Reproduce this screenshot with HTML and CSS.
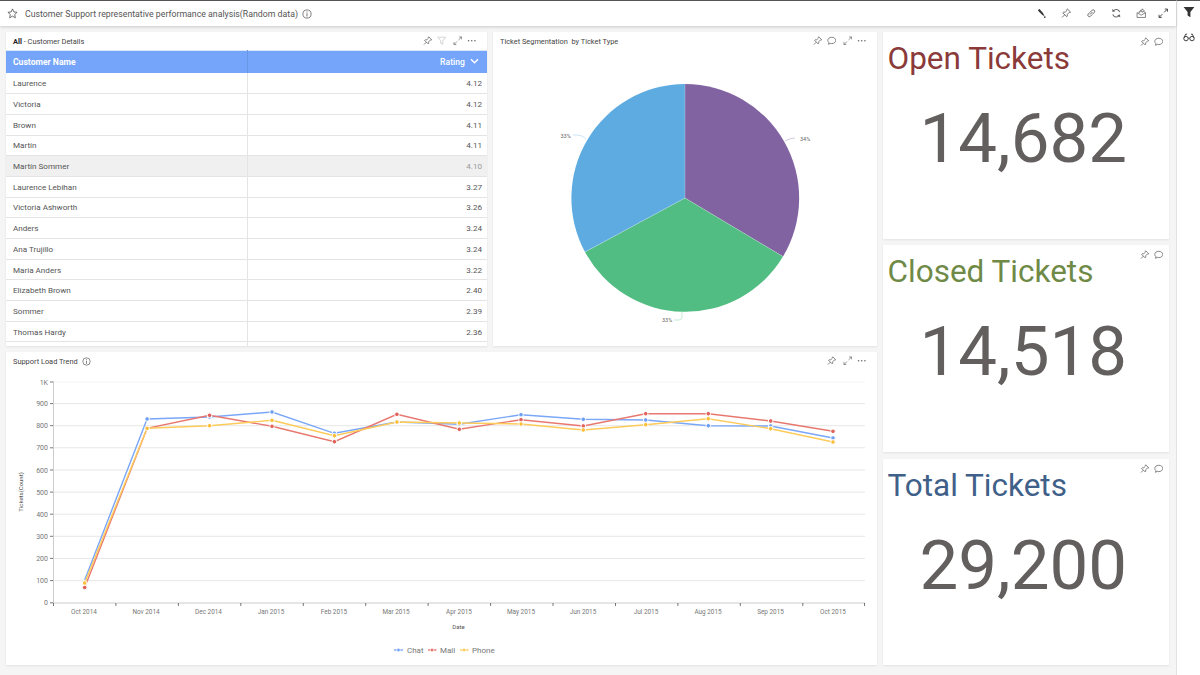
FILE: index.html
```html
<!DOCTYPE html>
<html lang="en">
<head>
<meta charset="utf-8">
<title>Customer Support representative performance analysis</title>
<link rel="stylesheet" href="styles.css">
</head>
<body>
<svg class="sprite" aria-hidden="true">
  <symbol id="i-pin" viewBox="0 0 12 12"><path d="M7.2 1 11 4.8 10.2 5.3 9.4 5 7.3 7.2 7.2 9.2 6.5 10 2 5.5 2.8 4.8 4.8 4.7 7 2.6 6.7 1.8ZM4.2 7.8 1.2 10.8" fill="none" stroke="currentColor" stroke-width="1" stroke-linejoin="round"/></symbol>
  <symbol id="i-filter" viewBox="0 0 12 12"><path d="M1 1.5H11L7.3 6V10.5L4.7 9V6Z" fill="none" stroke="currentColor" stroke-width="1" stroke-linejoin="round"/></symbol>
  <symbol id="i-expand" viewBox="0 0 12 12"><path d="M7 5 10.5 1.5M7.8 1.2H10.8V4.2M5 7 1.5 10.5M1.2 7.8V10.8H4.2" fill="none" stroke="currentColor" stroke-width="1"/></symbol>
  <symbol id="i-dots" viewBox="0 0 12 12"><circle cx="2" cy="6" r="1" fill="currentColor"/><circle cx="6" cy="6" r="1" fill="currentColor"/><circle cx="10" cy="6" r="1" fill="currentColor"/></symbol>
  <symbol id="i-comment" viewBox="0 0 12 12"><path d="M6 1.6C8.9 1.6 11 3.3 11 5.6S8.9 9.6 6 9.6C5.3 9.6 4.7 9.5 4.1 9.3L1.9 10.5 2.4 8.3C1.5 7.6 1 6.7 1 5.6 1 3.3 3.1 1.6 6 1.6Z" fill="none" stroke="currentColor" stroke-width="1" stroke-linejoin="round"/></symbol>
  <symbol id="i-info" viewBox="0 0 12 12"><circle cx="6" cy="6" r="4.9" fill="none" stroke="currentColor" stroke-width="1"/><path d="M6 5.2V9M6 3V4.2" stroke="currentColor" stroke-width="1.1"/></symbol>
</svg>

<div class="main">
  <header class="topbar">
    <svg class="star" viewBox="0 0 12 12"><path d="M6 1 7.5 4.3 11 4.7 8.4 7.1 9.1 10.7 6 8.9 2.9 10.7 3.6 7.1 1 4.7 4.5 4.3Z" fill="none" stroke="currentColor" stroke-width=".9" stroke-linejoin="round"/></svg>
    <h1 class="page-title">Customer Support representative performance analysis(Random data)</h1>
    <svg class="ic-info"><use href="#i-info"/></svg>
    <div class="top-actions">
      <svg class="tool dark" viewBox="0 0 12 12"><path d="M2.2 2.2 4 1 8 5.6 9.8 9.2 7.6 8.2 3.4 4.4Z" fill="currentColor"/><circle cx="10" cy="10.4" r="1" fill="currentColor"/></svg>
      <svg class="tool"><use href="#i-pin"/></svg>
      <svg class="tool" viewBox="0 0 12 12"><path d="M4.6 7.4 7.4 4.6M4.6 4.9 2.4 7.1A1.8 1.8 0 0 0 4.9 9.6L7.1 7.4M4.9 4.6 7.1 2.4A1.8 1.8 0 0 1 9.6 4.9L7.4 7.1" fill="none" stroke="currentColor" stroke-width="1.1"/></svg>
      <svg class="tool" viewBox="0 0 12 12"><path d="M10 4.6A4.3 4.3 0 0 0 2.6 3.4M2 7.4A4.3 4.3 0 0 0 9.4 8.6" fill="none" stroke="currentColor" stroke-width="1.2"/><path d="M1.4 1.2 1.7 4.6 5 3.8ZM10.6 10.8 10.3 7.4 7 8.2Z" fill="currentColor"/></svg>
      <svg class="tool" viewBox="0 0 12 12"><path d="M1.2 5.2V10.8H10.8V5.2L8.8 4M1.2 5.4 6 8.2 10.8 5.4M3.4 5.5C3.7 3.4 5 2.4 7 2.4V1L9.5 3.1 7 5V3.8C5.5 3.8 4.3 4.3 3.4 5.5Z" fill="none" stroke="currentColor" stroke-width=".9" stroke-linejoin="round"/></svg>
      <svg class="tool dark last"><use href="#i-expand"/></svg>
    </div>
  </header>

  <div class="dashboard">
    <div class="left">
      <div class="top-row">
        <section class="card table-card">
          <div class="card-head head-table">
            <span class="card-title"><b>All</b> - Customer Details</span>
            <div class="icons">
              <svg class="ic"><use href="#i-pin"/></svg>
              <svg class="ic faint"><use href="#i-filter"/></svg>
              <svg class="ic wide"><use href="#i-expand"/></svg>
              <svg class="ic"><use href="#i-dots"/></svg>
            </div>
          </div>
          <table class="grid">
            <thead>
              <tr><th class="name">Customer Name</th><th class="rate">Rating <svg class="chev" viewBox="0 0 10 8"><path d="M1 1.5 5 5.5 9 1.5" fill="none" stroke="#fff" stroke-width="1.6"/></svg></th></tr>
            </thead>
            <tbody>
              <tr><td>Laurence</td><td class="num">4.12</td></tr>
              <tr><td>Victoria</td><td class="num">4.12</td></tr>
              <tr><td>Brown</td><td class="num">4.11</td></tr>
              <tr><td>Martín</td><td class="num">4.11</td></tr>
              <tr class="hover"><td>Martín Sommer</td><td class="num">4.10</td></tr>
              <tr><td>Laurence Lebihan</td><td class="num">3.27</td></tr>
              <tr><td>Victoria Ashworth</td><td class="num">3.26</td></tr>
              <tr><td>Anders</td><td class="num">3.24</td></tr>
              <tr><td>Ana Trujillo</td><td class="num">3.24</td></tr>
              <tr><td>Maria Anders</td><td class="num">3.22</td></tr>
              <tr><td>Elizabeth Brown</td><td class="num">2.40</td></tr>
              <tr><td>Sommer</td><td class="num">2.39</td></tr>
              <tr><td>Thomas Hardy</td><td class="num">2.36</td></tr>
              <tr><td>&nbsp;</td><td class="num">&nbsp;</td></tr>
            </tbody>
          </table>
        </section>

        <section class="card pie-card">
          <div class="card-head head-pie">
            <span class="card-title">Ticket Segmentation&nbsp; by Ticket Type</span>
            <div class="icons">
              <svg class="ic"><use href="#i-pin"/></svg>
              <svg class="ic"><use href="#i-comment"/></svg>
              <svg class="ic wide"><use href="#i-expand"/></svg>
              <svg class="ic"><use href="#i-dots"/></svg>
            </div>
          </div>
          <svg class="pie" viewBox="493 50 384 296">
            <path d="M685 198V84A114 114 0 0 1 783 256.5Z" fill="#8063a0"/>
            <path d="M685 198 783 256.5A114 114 0 0 1 585 252Z" fill="#52bd82"/>
            <path d="M685 198 585 252A114 114 0 0 1 685 84Z" fill="#5dabe0"/>
            <path d="M685 84V198L783 256.5M685 198 585 252" fill="none" stroke="#fff" stroke-width=".4" opacity=".6"/>
            <path d="M785 141Q790 138 795 138" fill="none" stroke="#c9bcd8" stroke-width=".8"/>
            <path d="M573 135H578Q582 135 586 139" fill="none" stroke="#bfdcf2" stroke-width=".8"/>
            <path d="M682 312V317Q682 320 679 320H674" fill="none" stroke="#b8e6cc" stroke-width=".8"/>
            <text class="pie-label" x="560.5" y="137.5">33%</text>
            <text class="pie-label" x="800" y="140.5">34%</text>
            <text class="pie-label" x="662" y="322">33%</text>
          </svg>
        </section>
      </div>

      <section class="card line-card">
        <div class="card-head head-line">
          <span class="card-title">Support Load Trend</span>
          <svg class="ic-info small"><use href="#i-info"/></svg>
          <div class="icons">
            <svg class="ic"><use href="#i-pin"/></svg>
            <svg class="ic wide"><use href="#i-expand"/></svg>
            <svg class="ic"><use href="#i-dots"/></svg>
          </div>
        </div>
        <svg class="line-chart" viewBox="6 370 871 295">
          <g class="gridlines">
            <path class="g-top" d="M53 382H865"/>
            <path d="M53 403.6H865M53 425.7H865M53 447.8H865M53 470H865M53 492.1H865M53 514.2H865M53 536.3H865M53 558.4H865M53 580.6H865"/>
          </g>
          <path class="axis" d="M53.5 381V603M53 603H865"/>
          <path class="ticks" d="M50 382H53M50 403.6H53M50 425.7H53M50 447.8H53M50 470H53M50 492.1H53M50 514.2H53M50 536.3H53M50 558.4H53M50 580.6H53M50 602.8H53M53.5 603V606M115.9 603V606M178.4 603V606M240.8 603V606M303.3 603V606M365.7 603V606M428.1 603V606M490.6 603V606M553 603V606M615.5 603V606M677.9 603V606M740.3 603V606M802.8 603V606M864.5 603V606"/>
          <g class="y-labels">
            <text x="48" y="384.5">1K</text><text x="48" y="406">900</text><text x="48" y="428">800</text><text x="48" y="450">700</text><text x="48" y="472.5">600</text><text x="48" y="494.5">500</text><text x="48" y="516.5">400</text><text x="48" y="538.5">300</text><text x="48" y="561">200</text><text x="48" y="583">100</text><text x="48" y="605">0</text>
          </g>
          <g class="x-labels">
            <text x="84" y="614">Oct 2014</text><text x="146" y="614">Nov 2014</text><text x="208.5" y="614">Dec 2014</text><text x="271" y="614">Jan 2015</text><text x="334" y="614">Feb 2015</text><text x="396" y="614">Mar 2015</text><text x="459" y="614">Apr 2015</text><text x="521" y="614">May 2015</text><text x="583" y="614">Jun 2015</text><text x="646" y="614">Jul 2015</text><text x="708" y="614">Aug 2015</text><text x="770.5" y="614">Sep 2015</text><text x="833" y="614">Oct 2015</text>
          </g>
          <text class="axis-title" x="458.5" y="628.5">Date</text>
          <text class="axis-title" transform="translate(22.5 492) rotate(-90)">Tickets(Count)</text>

          <polyline class="s blue" points="84.7,580 147.1,419 209.6,417 272,412 334.4,433.3 396.9,422 459.3,424.3 521,414.7 583.3,419.3 645.7,420 708.3,425.7 770.7,426 833,438"/>
          <polyline class="s red" points="84.7,587.5 147.1,428.3 209.6,415.3 272,426.3 334.4,441.7 396.9,414.3 459.3,429.3 521,419.7 583.3,426 645.7,413.7 708.3,413.7 770.7,421 833,431.3"/>
          <polyline class="s yellow" points="84.7,583 147.1,428.3 209.6,425.7 272,420.3 334.4,435.7 396.9,422 459.3,423 521,424 583.3,430 645.7,424.7 708.3,418.7 770.7,428.7 833,442"/>

          <g class="dots blue-d">
            <circle cx="147.1" cy="419" r="2.3"/><circle cx="209.6" cy="417" r="2.3"/><circle cx="272" cy="412" r="2.3"/><circle cx="334.4" cy="433.3" r="2.3"/><circle cx="396.9" cy="422" r="2.3"/><circle cx="459.3" cy="424.3" r="2.3"/><circle cx="521" cy="414.7" r="2.3"/><circle cx="583.3" cy="419.3" r="2.3"/><circle cx="645.7" cy="420" r="2.3"/><circle cx="708.3" cy="425.7" r="2.3"/><circle cx="770.7" cy="426" r="2.3"/><circle cx="833" cy="438" r="2.3"/>
          </g>
          <g class="dots red-d">
            <circle cx="84.7" cy="587.5" r="2.3"/><circle cx="209.6" cy="415.3" r="2.3"/><circle cx="272" cy="426.3" r="2.3"/><circle cx="334.4" cy="441.7" r="2.3"/><circle cx="396.9" cy="414.3" r="2.3"/><circle cx="459.3" cy="429.3" r="2.3"/><circle cx="521" cy="419.7" r="2.3"/><circle cx="583.3" cy="426" r="2.3"/><circle cx="645.7" cy="413.7" r="2.3"/><circle cx="708.3" cy="413.7" r="2.3"/><circle cx="770.7" cy="421" r="2.3"/><circle cx="833" cy="431.3" r="2.3"/>
          </g>
          <g class="dots yellow-d">
            <circle cx="84.7" cy="583" r="2.3"/><circle cx="147.1" cy="428.3" r="2.3"/><circle cx="209.6" cy="425.7" r="2.3"/><circle cx="272" cy="420.3" r="2.3"/><circle cx="334.4" cy="435.7" r="2.3"/><circle cx="396.9" cy="422" r="2.3"/><circle cx="459.3" cy="423" r="2.3"/><circle cx="521" cy="424" r="2.3"/><circle cx="583.3" cy="430" r="2.3"/><circle cx="645.7" cy="424.7" r="2.3"/><circle cx="708.3" cy="418.7" r="2.3"/><circle cx="770.7" cy="428.7" r="2.3"/><circle cx="833" cy="442" r="2.3"/>
          </g>

          <g class="legend">
            <path class="s blue" d="M394 650H403"/><circle class="lg-dot blue-l" cx="398.5" cy="650" r="1.8"/>
            <text x="407" y="652.7">Chat</text>
            <path class="s red" d="M428 650H436.5"/><circle class="lg-dot red-l" cx="432" cy="650" r="1.8"/>
            <text x="440" y="652.7">Mail</text>
            <path class="s yellow" d="M460 650H468.5"/><circle class="lg-dot yellow-l" cx="464" cy="650" r="1.8"/>
            <text x="472" y="652.7">Phone</text>
          </g>
        </svg>
      </section>
    </div>

    <div class="right">
      <section class="card kpi">
        <div class="kpi-icons"><svg class="ic"><use href="#i-pin"/></svg><svg class="ic"><use href="#i-comment"/></svg></div>
        <h2 class="kpi-title open">Open Tickets</h2>
        <div class="kpi-value">14,682</div>
      </section>
      <section class="card kpi">
        <div class="kpi-icons"><svg class="ic"><use href="#i-pin"/></svg><svg class="ic"><use href="#i-comment"/></svg></div>
        <h2 class="kpi-title closed">Closed Tickets</h2>
        <div class="kpi-value">14,518</div>
      </section>
      <section class="card kpi">
        <div class="kpi-icons"><svg class="ic"><use href="#i-pin"/></svg><svg class="ic"><use href="#i-comment"/></svg></div>
        <h2 class="kpi-title total">Total Tickets</h2>
        <div class="kpi-value">29,200</div>
      </section>
    </div>
  </div>
</div>

<aside class="rail">
  <svg class="rail-ic" viewBox="0 0 12 12"><path d="M.6 1H11.4L7.4 6V11.2L4.6 9.4V6Z" fill="#333"/></svg>
  <svg class="rail-ic" viewBox="0 0 12 12"><circle cx="3" cy="7.6" r="2.2" fill="none" stroke="#444" stroke-width="1"/><circle cx="9" cy="7.6" r="2.2" fill="none" stroke="#444" stroke-width="1"/><path d="M5.2 7.2H6.8M1 7 2.6 3.2H4M11 7 9.4 3.2H8" fill="none" stroke="#444" stroke-width="1"/></svg>
</aside>
</body>
</html>
```
FILE: styles.css
```css
* { box-sizing: border-box; }
html, body { height: 100%; }
body {
  margin: 0;
  display: flex;
  width: 1200px;
  height: 675px;
  overflow: hidden;
  background: #f5f5f5;
  font-family: Roboto, "Liberation Sans", sans-serif;
  color: #555;
}
.sprite { display: none; }

.main { width: 1176px; display: flex; flex-direction: column; }

.topbar {
  height: 26px;
  flex: none;
  display: flex;
  align-items: center;
  padding: 0 8px 0 7px;
  background: #fff;
  border-top: 1px solid #555;
  box-shadow: 0 1px 3px rgba(0, 0, 0, .18);
  position: relative;
}
.star { width: 11px; height: 11px; color: #555; }
.page-title {
  margin: 0 0 0 7px;
  font-size: 8.75px;
  font-weight: 400;
  color: #555;
  white-space: nowrap;
}
.ic-info { width: 10px; height: 10px; margin-left: 4px; color: #666; }
.ic-info.small { width: 9px; height: 9px; }
.top-actions { margin-left: auto; display: flex; align-items: center; gap: 14.5px; }
.tool { width: 10.5px; height: 10.5px; color: #666; }
.tool.dark { color: #333; }
.tool.last { margin-left: -3px; }

.dashboard { flex: 1; display: flex; gap: 6px; padding: 6px 7px 10px 6px; min-height: 0; }
.left { width: 871px; display: flex; flex-direction: column; gap: 6px; }
.top-row { height: 314px; display: flex; gap: 6px; }
.right { width: 286px; display: flex; flex-direction: column; gap: 6px; }

.card {
  background: #fff;
  box-shadow: 0 1px 2px rgba(0, 0, 0, .08);
  overflow: hidden;
}
.card-head { height: 18px; flex: none; display: flex; align-items: center; }
.card-title { font-size: 7.4px; color: #444; white-space: nowrap; }
.card-title b { color: #222; font-weight: 700; }
.icons { margin-left: auto; display: flex; align-items: center; gap: 4.5px; }
.ic { width: 9.5px; height: 9.5px; color: #666; display: block; }
.ic.faint { color: #c8c8c8; }
.ic.wide { margin-left: 2px; color: #777; }

.table-card { width: 481px; }
.head-table { padding: 0 11px 0 7px; }
.grid {
  width: 481px;
  table-layout: fixed;
  border-collapse: collapse;
  font-size: 8.1px;
  color: #555;
}
.grid th {
  height: 22.5px;
  background: #75a5fb;
  color: #fff;
  font-size: 8.6px;
  font-weight: 700;
  padding: 0 6px 0 7px;
  border-right: 1px solid #6a96e6;
  border-top: 1px solid #dbe6f8;
}
.grid th:last-child { border-right: 0; }
.grid .name { width: 241.5px; text-align: left; }
.grid .rate { text-align: right; font-weight: 500; padding-right: 8px; }
.chev { width: 9px; height: 7px; margin-left: 3px; }
.grid td {
  height: 20.7px;
  padding: 0 5px 0 7px;
  border-bottom: 1px solid #e4e4e4;
  border-right: 1px solid #e4e4e4;
}
.grid td:last-child { border-right: 0; }
.grid .num { text-align: right; }
.grid .hover td { background: #f0f0f0; }
.grid .hover .num { color: #999; }

.pie-card { width: 384px; display: flex; flex-direction: column; }
.head-pie { padding: 0 11px 0 7px; }
.pie { flex: 1; display: block; width: 384px; height: 296px; }
.pie-label { font-size: 5.5px; fill: #666; }

.line-card { height: 313px; display: flex; flex-direction: column; }
.head-line { padding: 0 11px 0 7px; }
.line-chart { display: block; width: 871px; height: 295px; }
.gridlines path { stroke: #e7e7e7; stroke-width: 1; fill: none; }
.gridlines .g-top { stroke: #f4f4f4; }
.axis { stroke: #ccc; stroke-width: 1; fill: none; }
.ticks { stroke: #555; stroke-width: .8; fill: none; }
.y-labels text { font-size: 7px; fill: #777; text-anchor: end; }
.x-labels text { font-size: 6.4px; fill: #777; text-anchor: middle; }
.axis-title { font-size: 6px; fill: #555; text-anchor: middle; }
.s { fill: none; stroke-width: 1.4; }
.s.blue { stroke: #7aa7f7; }
.s.red { stroke: #e8786f; }
.s.yellow { stroke: #fdcb5a; }
.dots circle { stroke: #fff; stroke-width: 1; }
.blue-d circle { fill: #6f9ff5; }
.red-d circle { fill: #e0625a; }
.yellow-d circle { fill: #fbbf3a; }
.legend text { font-size: 8px; fill: #777; }
.lg-dot { stroke: #fff; stroke-width: .6; }
.blue-l { fill: #7aa7f7; }
.red-l { fill: #e8786f; }
.yellow-l { fill: #fdcb5a; }

.kpi {
  height: 207px;
  flex: none;
  display: flex;
  flex-direction: column;
  padding: 0 10px 0 4.5px;
  position: relative;
}
.kpi:last-child { height: 206px; margin-top: 1px; }
.kpi-icons {
  position: absolute;
  top: 4.5px;
  right: 6px;
  display: flex;
  gap: 4.5px;
}
.kpi-title {
  margin: 9px 0 0;
  font-size: 31.5px;
  line-height: 36px;
  font-weight: 400;
  white-space: nowrap;
}
.open { color: #8b3a3a; }
.closed { color: #6f8a46; }
.total { color: #3f6088; }
.kpi-value {
  margin-top: 20px;
  text-align: center;
  font-size: 69px;
  line-height: 84px;
  color: #635f5f;
}

.rail {
  width: 24px;
  flex: none;
  background: #fff;
  border-left: 1px solid #e3e3e3;
  border-top: 1px solid #555;
  display: flex;
  flex-direction: column;
  align-items: center;
  gap: 13px;
  padding-top: 5px;
}
.rail-ic { width: 12px; height: 12px; }
```
